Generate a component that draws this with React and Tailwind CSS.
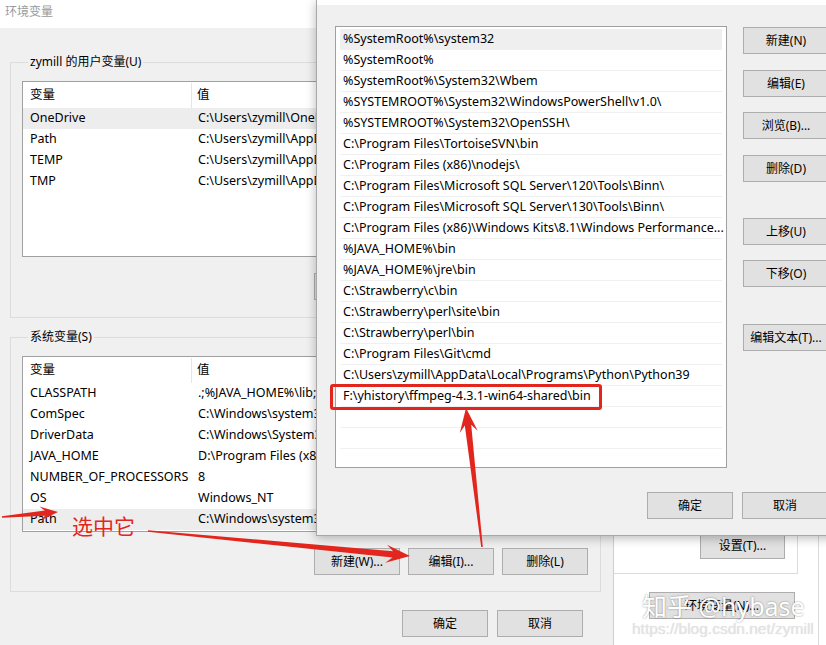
import React from 'react';

const ui = "font-['Noto_Sans','Noto_Sans_CJK_SC',sans-serif]";

const userVars = [
  ['OneDrive', 'C:\\Users\\zymill\\OneDrive'],
  ['Path', 'C:\\Users\\zymill\\AppData\\Local\\Microsoft\\WindowsApps;'],
  ['TEMP', 'C:\\Users\\zymill\\AppData\\Local\\Temp'],
  ['TMP', 'C:\\Users\\zymill\\AppData\\Local\\Temp'],
];

const sysVars = [
  ['CLASSPATH', '.;%JAVA_HOME%\\lib;%JAVA_HOME%\\lib\\tools.jar'],
  ['ComSpec', 'C:\\Windows\\system32\\cmd.exe'],
  ['DriverData', 'C:\\Windows\\System32\\Drivers\\DriverData'],
  ['JAVA_HOME', 'D:\\Program Files (x86)\\Java\\jdk1.8.0_91'],
  ['NUMBER_OF_PROCESSORS', '8'],
  ['OS', 'Windows_NT'],
  ['Path', 'C:\\Windows\\system32;C:\\Windows;C:\\Windows\\System32\\Wbem'],
];

const paths = [
  '%SystemRoot%\\system32',
  '%SystemRoot%',
  '%SystemRoot%\\System32\\Wbem',
  '%SYSTEMROOT%\\System32\\WindowsPowerShell\\v1.0\\',
  '%SYSTEMROOT%\\System32\\OpenSSH\\',
  'C:\\Program Files\\TortoiseSVN\\bin',
  'C:\\Program Files (x86)\\nodejs\\',
  'C:\\Program Files\\Microsoft SQL Server\\120\\Tools\\Binn\\',
  'C:\\Program Files\\Microsoft SQL Server\\130\\Tools\\Binn\\',
  'C:\\Program Files (x86)\\Windows Kits\\8.1\\Windows Performance...',
  '%JAVA_HOME%\\bin',
  '%JAVA_HOME%\\jre\\bin',
  'C:\\Strawberry\\c\\bin',
  'C:\\Strawberry\\perl\\site\\bin',
  'C:\\Strawberry\\perl\\bin',
  'C:\\Program Files\\Git\\cmd',
  'C:\\Users\\zymill\\AppData\\Local\\Programs\\Python\\Python39',
  'F:\\yhistory\\ffmpeg-4.3.1-win64-shared\\bin',
  '',
  '',
  '',
];

function Btn({ children, className = '' }) {
  return (
    <div className={`h-[27px] flex items-center justify-center bg-[#e1e1e1] border border-[#adadad] text-[12px] text-black shrink-0 whitespace-nowrap ${className}`}>
      {children}
    </div>
  );
}

function VarList({ rows, selected }) {
  return (
    <div className="w-[566px] h-[176px] bg-white border border-[#a0a0a0] pt-[1px] overflow-hidden text-[12.5px]">
      <div className="flex h-[25px]">
        <div className="w-[169px] pl-[7px] border-r border-[#e5e5e5] flex items-center">变量</div>
        <div className="pl-[5px] flex items-center">值</div>
      </div>
      {rows.map(([k, v]) => (
        <div
          key={k}
          className={`flex h-[21px] items-center whitespace-nowrap ${k === selected ? 'bg-[#ededed]' : ''}`}
        >
          <div className="w-[169px] pl-[7px] shrink-0">{k}</div>
          <div className="pl-[6px]">{v}</div>
        </div>
      ))}
    </div>
  );
}

function Group({ title, rows, selected, className = '' }) {
  return (
    <fieldset className={`border border-[#dcdcdc] ml-[10px] w-[591px] pl-[11px] ${className}`}>
      <legend className="ml-[6px] px-[2px] text-[12px] leading-[16px]">{title}</legend>
      <div className="mt-[11px]">
        <VarList rows={rows} selected={selected} />
      </div>
      <div className="flex justify-end gap-[8px] w-[566px] mt-[16px]">
        <Btn className="w-[86px]">新建(W)...</Btn>
        <Btn className="w-[86px]">编辑(I)...</Btn>
        <Btn className="w-[86px]">删除(L)</Btn>
      </div>
    </fieldset>
  );
}

function arrow(x1, y1, x2, y2, tail = 1, neck = 3.2, barb = 9, headLen = 22) {
  const len = Math.hypot(x2 - x1, y2 - y1);
  const dx = (x2 - x1) / len;
  const dy = (y2 - y1) / len;
  const nx = -dy;
  const ny = dx;
  const p = (bx, by, back, side) => `${(bx - dx * back + nx * side).toFixed(1)},${(by - dy * back + ny * side).toFixed(1)}`;
  return [
    p(x1, y1, 0, tail),
    p(x2, y2, headLen * 0.72, neck),
    p(x2, y2, headLen, barb),
    p(x2, y2, 0, 0),
    p(x2, y2, headLen, -barb),
    p(x2, y2, headLen * 0.72, -neck),
    p(x1, y1, 0, -tail),
  ].join(' ');
}

export default function App() {
  return (
    <div className={`relative w-[826px] h-[645px] overflow-hidden bg-white text-black ${ui}`}>
      {/* system properties window, behind */}
      <div className="absolute left-[613px] top-0 w-[213px] h-[645px] bg-white border-l border-[#cfcfcf] flex">
        <div className="w-[205px] h-full border-r border-[#dadada] flex flex-col">
          <div className="w-[184px] h-[574px] border-r border-b border-[#dcdcdc] flex flex-col justify-end items-end pr-[12px] pb-[14px]">
            <Btn className="w-[85px]">设置(T)...</Btn>
          </div>
          <Btn className="w-[146px] ml-[35px] mt-[18px]">环境变量(N)...</Btn>
        </div>
      </div>

      {/* environment variables window */}
      <div className="absolute left-0 top-0 w-[613px] h-[645px] bg-[#f0f0f0] flex flex-col">
        <div className="h-[28px] bg-white pl-[5px] text-[12px] leading-[24px] text-[#9a9a9a] shrink-0">环境变量</div>
        <Group title="zymill 的用户变量(U)" rows={userVars} selected="OneDrive" className="mt-[26px] pb-[17px]" />
        <Group title="系统变量(S)" rows={sysVars} selected="Path" className="mt-[11px] pb-[16px]" />
        <div className="flex justify-end gap-[9px] w-[583px] mt-[18px]">
          <Btn className="w-[86px]">确定</Btn>
          <Btn className="w-[86px]">取消</Btn>
        </div>
      </div>

      {/* edit environment variable dialog */}
      <div className="absolute left-[316px] top-0 w-[530px] h-[536px] bg-[#f0f0f0] border-l border-b border-[#a8a8a8] shadow-[0_2px_10px_rgba(0,0,0,0.28)] flex flex-col">
        <div className="h-[5px] bg-white shrink-0" />
        <div className="flex pl-[18px] pt-[21px] gap-[16px]">
          <div className="w-[392px] h-[442px] bg-white border border-[#a0a0a0] pt-[2px] px-[4px] overflow-hidden text-[12.5px]">
            {paths.map((p, i) => (
              <div
                key={i}
                className={`h-[21px] border-b border-[#f0f0f0] flex items-center pl-[3px] whitespace-nowrap ${i === 0 ? 'bg-[#efefef]' : ''}`}
              >
                {p}
              </div>
            ))}
          </div>
          <div className="flex flex-col pt-[1px]">
            <Btn className="w-[86px]">新建(N)</Btn>
            <Btn className="w-[86px] mt-[16px]">编辑(E)</Btn>
            <Btn className="w-[86px] mt-[15px]">浏览(B)...</Btn>
            <Btn className="w-[86px] mt-[16px]">删除(D)</Btn>
            <Btn className="w-[86px] mt-[36px]">上移(U)</Btn>
            <Btn className="w-[86px] mt-[15px]">下移(O)</Btn>
            <Btn className="w-[86px] mt-[37px]">编辑文本(T)...</Btn>
          </div>
        </div>
        <div className="flex gap-[9px] pl-[330px] mt-[24px]">
          <Btn className="w-[86px]">确定</Btn>
          <Btn className="w-[86px]">取消</Btn>
        </div>
      </div>

      {/* watermark */}
      <div className="absolute left-[642px] top-[591px] text-[25px] leading-[30px] text-white [text-shadow:0_0_2px_rgba(0,0,0,0.45)] whitespace-nowrap">
        知乎 @hybase
      </div>
      <div className="absolute left-[632px] top-[620px] font-['Liberation_Sans',sans-serif] text-[15.5px] leading-[18px] text-[#e4e4e4] [text-shadow:0_0_1px_rgba(0,0,0,0.15)] whitespace-nowrap">
        https://blog.csdn.net/zymill
      </div>

      {/* annotation */}
      <div className="absolute left-[330px] top-[384px] w-[272px] h-[26px] border-[3px] border-[#e3261d] rounded-[3px]" />
      <div className="absolute left-[72px] top-[511px] text-[21px] leading-[28px] text-[#e3261d] font-['Noto_Sans_CJK_SC',sans-serif]">
        选中它
      </div>
      <svg className="absolute left-0 top-0" width="826" height="645" viewBox="0 0 826 645">
        <polygon points={arrow(2, 517, 58, 512, 0.8, 2.6, 7, 18)} fill="#e3261d" />
        <polygon points={arrow(148, 531, 410, 556, 0.8, 3.2, 9, 24)} fill="#e3261d" />
        <polygon points={arrow(482, 547, 466, 408, 0.8, 3.2, 9, 24)} fill="#e3261d" />
      </svg>
    </div>
  );
}
